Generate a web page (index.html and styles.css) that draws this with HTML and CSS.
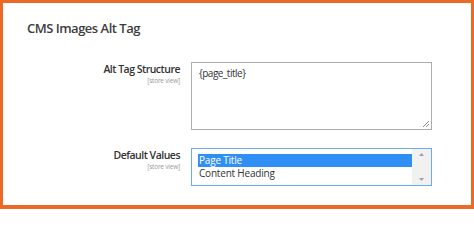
FILE: index.html
```html
<!DOCTYPE html>
<html>
<head>
<meta charset="utf-8">
<link rel="stylesheet" href="styles.css">
</head>
<body>
<div class="panel">
  <h2 class="title">CMS Images Alt Tag</h2>
  <div class="row row-first">
    <div class="label">
      <span class="label-main">Alt Tag Structure</span>
      <span class="scope">[store view]</span>
    </div>
    <div class="control">
      <div class="textarea">
        <span class="ta-text">{page_title}</span>
        <svg class="grip" width="8" height="8" viewBox="0 0 8 8"><path d="M7 1 L1 7 M7 4 L4 7" stroke="#8a8a8a" stroke-width="1" fill="none"/></svg>
      </div>
    </div>
  </div>
  <div class="row row-second">
    <div class="label">
      <span class="label-main">Default Values</span>
      <span class="scope">[store view]</span>
    </div>
    <div class="control">
      <div class="listbox">
        <div class="options">
          <div class="option selected">Page Title</div>
          <div class="option">Content Heading</div>
        </div>
        <div class="scrollbar">
          <svg width="5" height="3" viewBox="0 0 5 3"><path d="M0 3 L2.5 0 L5 3 Z" fill="#a0a0a0"/></svg>
          <svg width="5" height="3" viewBox="0 0 5 3"><path d="M0 0 L2.5 3 L5 0 Z" fill="#a0a0a0"/></svg>
        </div>
      </div>
    </div>
  </div>
</div>
</body>
</html>
```
FILE: styles.css
```css
html, body {
  margin: 0;
  padding: 0;
  background: #ffffff;
}
body {
  width: 474px;
  height: 209px;
  overflow: hidden;
  font-family: "Open Sans", "Liberation Sans", sans-serif;
  color: #333333;
}
.panel {
  box-sizing: border-box;
  width: 474px;
  height: 209px;
  border-style: solid;
  border-color: #ec6a25;
  border-width: 3px 3px 4px 3px;
  padding: 16px 0 0 24px;
}
.title {
  margin: 0;
  font-size: 13px;
  font-weight: 600;
  letter-spacing: -0.5px;
  line-height: 18px;
  color: #3d3d3d;
}
.row {
  display: flex;
  align-items: flex-start;
}
.row-first {
  margin-top: 25px;
}
.row-second {
  margin-top: 18px;
}
.label {
  width: 153px;
  display: flex;
  flex-direction: column;
  align-items: flex-end;
  padding-top: 0;
}
.label-main {
  font-size: 10.5px;
  font-weight: 600;
  letter-spacing: -0.5px;
  line-height: 14px;
  color: #333333;
}
.scope {
  font-size: 6.5px;
  letter-spacing: -0.2px;
  line-height: 9px;
  color: #9a9a9a;
}
.control {
  margin-left: 11px;
}
.textarea {
  position: relative;
  box-sizing: border-box;
  width: 241px;
  height: 68px;
  border: 1px solid #adadad;
  padding: 3px 7px;
  font-size: 10px;
  letter-spacing: -0.5px;
  line-height: 14px;
  color: #333333;
}
.grip {
  position: absolute;
  right: 1px;
  bottom: 1px;
}
.listbox {
  box-sizing: border-box;
  width: 241px;
  height: 38px;
  border: 1px solid #6aaee8;
  display: flex;
}
.options {
  flex: 1;
  padding: 5px 0 0 6px;
}
.option {
  font-size: 10px;
  letter-spacing: -0.2px;
  line-height: 13px;
  height: 13px;
  padding-left: 1px;
  color: #333333;
  white-space: nowrap;
}
.option.selected {
  background: #2f8ff4;
  color: #ffffff;
}
.scrollbar {
  width: 19px;
  background: #f1f1f1;
  display: flex;
  flex-direction: column;
  justify-content: space-between;
  align-items: center;
  padding: 4px 0 4px 0;
  box-sizing: border-box;
}
```
